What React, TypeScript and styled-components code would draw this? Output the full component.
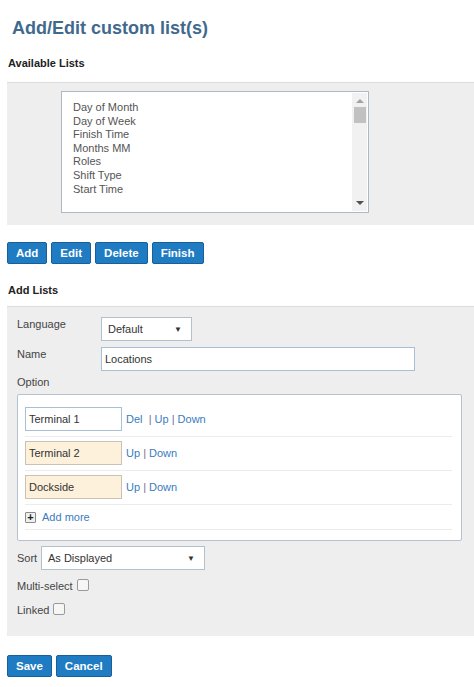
import * as React from "react";
import styled, {createGlobalStyle} from "styled-components";

const GlobalStyle = createGlobalStyle`
  html, body { margin: 0; padding: 0; background: #fff; }
  body { font-family: "Liberation Sans", Arial, sans-serif; color: #333; }
`;

const Page = styled.div`
  padding: 0 0 0 7px;
  width: 467px;
`;

const Title = styled.h1`
  margin: 17px 0 0 5px;
  font-size: 18px;
  line-height: 22px;
  font-weight: bold;
  color: #3f6a8e;
`;

const SectionLabel = styled.div<{$top: number}>`
  margin: ${(p) => p.$top}px 0 0 1px;
  font-size: 11px;
  line-height: 14px;
  font-weight: bold;
  color: #222;
`;

const Panel = styled.div<{$height: number; $top: number}>`
  margin-top: ${(p) => p.$top}px;
  height: ${(p) => p.$height}px;
  background: #eeeeee;
  border-top: 1px solid #dcdcdc;
  box-sizing: border-box;
`;

const ListPanel = styled(Panel)`
  padding: 8px 0 0 54px;
`;

const ListBox = styled.div`
  width: 308px;
  height: 122px;
  box-sizing: border-box;
  border: 1px solid #a9b9c8;
  background: #fff;
  display: flex;
`;

const ListItems = styled.ul`
  flex: 1;
  margin: 0;
  padding: 9px 0 0 11px;
  list-style: none;
  font-size: 11px;
  line-height: 13.6px;
  color: #555;
`;

const ScrollBar = styled.div`
  width: 15px;
  margin: 1px 1px 1px 0;
  background: #f1f1f1;
  display: flex;
  flex-direction: column;
  align-items: center;
`;

const Arrow = styled.div<{$down?: boolean; $dim?: boolean}>`
  width: 0;
  height: 0;
  margin: ${(p) => (p.$down ? "auto 0 6px" : "6px 0 0")};
  border-left: 4px solid transparent;
  border-right: 4px solid transparent;
  ${(p) =>
    p.$down
      ? `border-top: 4px solid ${p.$dim ? "#a3a3a3" : "#505050"};`
      : `border-bottom: 4px solid ${p.$dim ? "#a3a3a3" : "#505050"};`}
`;

const Thumb = styled.div`
  width: 12px;
  height: 16px;
  margin-top: 4px;
  background: #c1c1c1;
`;

const ButtonRow = styled.div<{$top: number}>`
  display: flex;
  gap: 4px;
  margin-top: ${(p) => p.$top}px;
`;

const Button = styled.button`
  height: 22px;
  padding: 0 8px;
  box-sizing: border-box;
  border: 1px solid #1b5f98;
  border-radius: 2px;
  background: #1f7bc2;
  color: #fff;
  font-family: "Liberation Sans", Arial, sans-serif;
  font-size: 11.5px;
  font-weight: bold;
  line-height: 20px;
  cursor: pointer;
`;

const FormPanel = styled(Panel)`
  padding: 10px 0 0 10px;
`;

const FieldRow = styled.div<{$top?: number}>`
  display: flex;
  align-items: flex-start;
  margin-top: ${(p) => p.$top ?? 0}px;
`;

const Label = styled.div<{$width?: number; $top?: number}>`
  width: ${(p) => (p.$width ? `${p.$width}px` : "auto")};
  padding-top: ${(p) => p.$top ?? 0}px;
  font-size: 11px;
  line-height: 14px;
  color: #444;
`;

const Select = styled.div<{$width: number}>`
  width: ${(p) => p.$width}px;
  height: 24px;
  box-sizing: border-box;
  border: 1px solid #b4c0cb;
  background: #fff;
  display: flex;
  align-items: center;
  justify-content: space-between;
  padding: 0 9px 0 6px;
  font-size: 11px;
  color: #333;
  &::after {
    content: "▼";
    font-size: 8px;
    color: #333;
  }
`;

const TextInput = styled.div<{$width: number; $cream?: boolean}>`
  width: ${(p) => p.$width}px;
  height: 24px;
  box-sizing: border-box;
  border: 1px solid ${(p) => (p.$cream ? "#c9c3b4" : "#a8bfd5")};
  background: ${(p) => (p.$cream ? "#fdf1dc" : "#fff")};
  display: flex;
  align-items: center;
  padding: 0 3px;
  font-size: 11px;
  color: #333;
`;

const OptionBox = styled.div`
  margin-top: 5px;
  width: 445px;
  box-sizing: border-box;
  border: 1px solid #b6c3ce;
  border-radius: 2px;
  background: #fff;
  padding: 12px 9px 10px 7px;
`;

const OptionRow = styled.div<{$first?: boolean}>`
  display: flex;
  align-items: center;
  gap: 4px;
  margin-top: ${(p) => (p.$first ? 0 : 4)}px;
  padding-bottom: 5px;
  border-bottom: 1px solid #ececec;
`;

const AddMoreRow = styled.div`
  display: flex;
  align-items: center;
  gap: 6px;
  height: 24px;
  border-bottom: 1px solid #ececec;
`;

const Links = styled.div`
  font-size: 11px;
  color: #3a7cbf;
  white-space: pre;
`;

const Pipe = styled.span`
  color: #7a6e92;
`;

const PlusBox = styled.span`
  width: 11px;
  height: 11px;
  box-sizing: border-box;
  border: 1px solid #8a8a8a;
  border-radius: 1px;
  background: #f0f0f0;
  display: inline-flex;
  align-items: center;
  justify-content: center;
  font-size: 11px;
  line-height: 9px;
  font-weight: bold;
  color: #222;
`;

const Checkbox = styled.span`
  display: inline-block;
  width: 12px;
  height: 12px;
  box-sizing: border-box;
  border: 1px solid #9a9a9a;
  border-radius: 2px;
  background: #f6f6f6;
  margin-left: 4px;
  vertical-align: -1px;
`;

const CheckLine = styled.div<{$top: number}>`
  margin-top: ${(p) => p.$top}px;
  font-size: 11px;
  line-height: 14px;
  color: #444;
`;

const lists = ["Day of Month", "Day of Week", "Finish Time", "Months MM", "Roles", "Shift Type", "Start Time"];

const options = [
  {value: "Terminal 1", del: true},
  {value: "Terminal 2", del: false},
  {value: "Dockside", del: false},
];

export default function App() {
  return (
    <Page>
      <GlobalStyle />
      <Title>Add/Edit custom list(s)</Title>
      <SectionLabel $top={17}>Available Lists</SectionLabel>
      <ListPanel $height={143} $top={12}>
        <ListBox>
          <ListItems>
            {lists.map((l) => (
              <li key={l}>{l}</li>
            ))}
          </ListItems>
          <ScrollBar>
            <Arrow $dim />
            <Thumb />
            <Arrow $down />
          </ScrollBar>
        </ListBox>
      </ListPanel>
      <ButtonRow $top={17}>
        <Button>Add</Button>
        <Button>Edit</Button>
        <Button>Delete</Button>
        <Button>Finish</Button>
      </ButtonRow>
      <SectionLabel $top={19}>Add Lists</SectionLabel>
      <FormPanel $height={330} $top={9}>
        <FieldRow>
          <Label $width={84}>Language</Label>
          <Select $width={91}>Default</Select>
        </FieldRow>
        <FieldRow $top={6}>
          <Label $width={84}>Name</Label>
          <TextInput $width={314}>Locations</TextInput>
        </FieldRow>
        <Label $top={4}>Option</Label>
        <OptionBox>
          {options.map((o, i) => (
            <OptionRow key={o.value} $first={i === 0}>
              <TextInput $width={97} $cream={i > 0}>
                {o.value}
              </TextInput>
              <Links>
                {o.del ? (
                  <>
                    Del  <Pipe>|</Pipe> Up <Pipe>|</Pipe> Down
                  </>
                ) : (
                  <>
                    Up <Pipe>|</Pipe> Down
                  </>
                )}
              </Links>
            </OptionRow>
          ))}
          <AddMoreRow>
            <PlusBox>+</PlusBox>
            <Links>Add more</Links>
          </AddMoreRow>
        </OptionBox>
        <FieldRow $top={5}>
          <Label $width={24} $top={5}>Sort</Label>
          <Select $width={164}>As Displayed</Select>
        </FieldRow>
        <CheckLine $top={9}>
          Multi-select<Checkbox />
        </CheckLine>
        <CheckLine $top={10}>
          Linked<Checkbox />
        </CheckLine>
      </FormPanel>
      <ButtonRow $top={19}>
        <Button>Save</Button>
        <Button>Cancel</Button>
      </ButtonRow>
    </Page>
  );
}
